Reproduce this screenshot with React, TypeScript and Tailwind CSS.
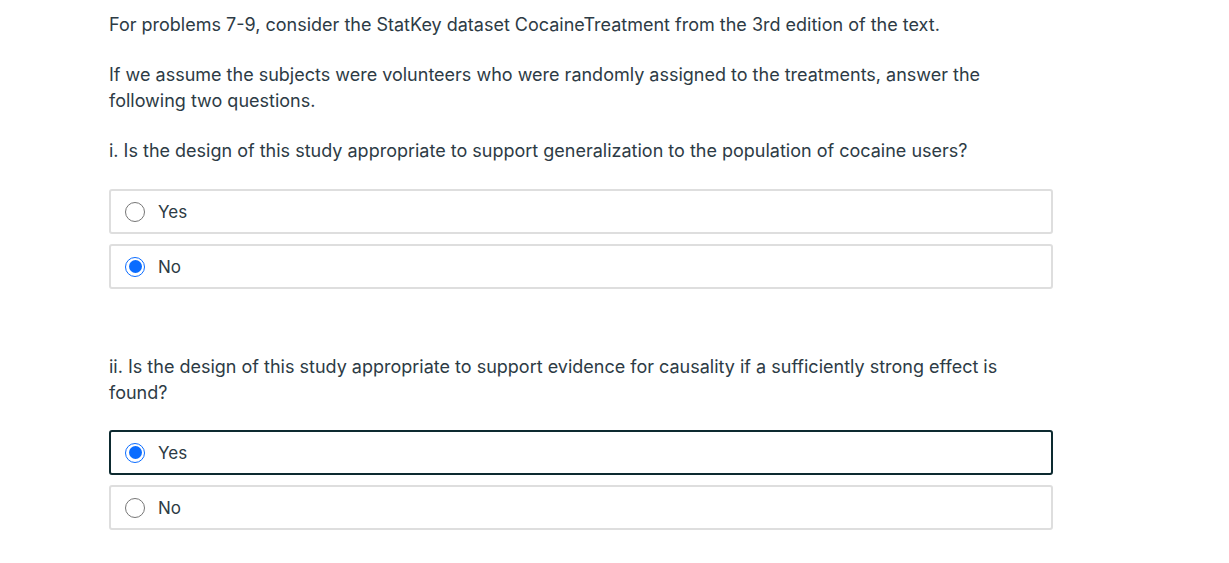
import React from "react";

function Radio({ checked }: { checked: boolean }) {
  return checked ? (
    <span className="flex h-[20px] w-[20px] shrink-0 items-center justify-center rounded-full border-[1.5px] border-[#0a6cff] bg-white">
      <span className="h-[13px] w-[13px] rounded-full bg-[#0a6cff]" />
    </span>
  ) : (
    <span className="h-[20px] w-[20px] shrink-0 rounded-full border border-[#767676] bg-white" />
  );
}

function Option({ label, checked, focused }: { label: string; checked: boolean; focused?: boolean }) {
  return (
    <div
      className={
        "flex h-[45px] items-center gap-[13px] rounded-[3px] border-2 pl-[14px] " +
        (focused ? "border-[#0d2a30]" : "border-[#dedede]")
      }
    >
      <Radio checked={checked} />
      <span className="text-[17px] text-[#2d3b45]">{label}</span>
    </div>
  );
}

export default function App() {
  return (
    <div className="min-h-[563px] bg-white" style={{ fontFamily: "Inter, 'Noto Sans', sans-serif" }}>
      <div className="ml-[109px] w-[944px] pt-[12px] text-[18px] leading-[26px] text-[#2d3b45]">
        <p>For problems 7-9, consider the StatKey dataset CocaineTreatment from the 3rd edition of the text.</p>
        <p className="mt-[24px]">
          If we assume the subjects were volunteers who were randomly assigned to the treatments, answer the following two questions.
        </p>
        <p className="mt-[24px]">i. Is the design of this study appropriate to support generalization to the population of cocaine users?</p>
        <div className="mt-[25px] flex flex-col gap-[10px]">
          <Option label="Yes" checked={false} />
          <Option label="No" checked={true} />
        </div>
        <p className="mt-[65px]">
          ii. Is the design of this study appropriate to support evidence for causality if a sufficiently strong effect is found?
        </p>
        <div className="mt-[24px] flex flex-col gap-[10px]">
          <Option label="Yes" checked={true} focused />
          <Option label="No" checked={false} />
        </div>
      </div>
    </div>
  );
}
